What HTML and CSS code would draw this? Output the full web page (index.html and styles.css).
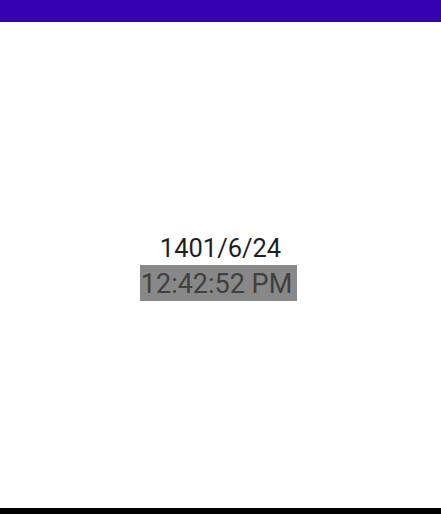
FILE: index.html
```html
<!DOCTYPE html>
<html>
<head>
<meta charset="utf-8">
<link rel="stylesheet" href="styles.css">
</head>
<body>
<div class="screen">
  <div class="status-bar"></div>
  <main class="content">
    <div class="stack">
      <div class="date">1401/6/24</div>
      <div class="time">12:42:52 PM</div>
    </div>
  </main>
  <div class="nav-bar"></div>
</div>
</body>
</html>
```
FILE: styles.css
```css
html, body {
  margin: 0;
  padding: 0;
  background: #ffffff;
}
.screen {
  width: 441px;
  height: 514px;
  display: flex;
  flex-direction: column;
  font-family: Roboto, "Liberation Sans", sans-serif;
}
.status-bar {
  height: 22px;
  background: #3700b3;
  flex: none;
}
.nav-bar {
  height: 6px;
  background: #000000;
  flex: none;
}
.content {
  flex: 1;
  display: flex;
  align-items: center;
  justify-content: center;
  padding-top: 4px;
}
.stack {
  display: flex;
  flex-direction: column;
  align-items: center;
}
.date {
  font-size: 25.5px;
  line-height: 30px;
  margin-bottom: 2px;
  color: #1f1f1f;
}
.time {
  font-size: 27px;
  line-height: 33px;
  padding: 3px 5px 0 1px;
  margin-right: 4px;
  background: #888888;
  color: #404040;
}
```
